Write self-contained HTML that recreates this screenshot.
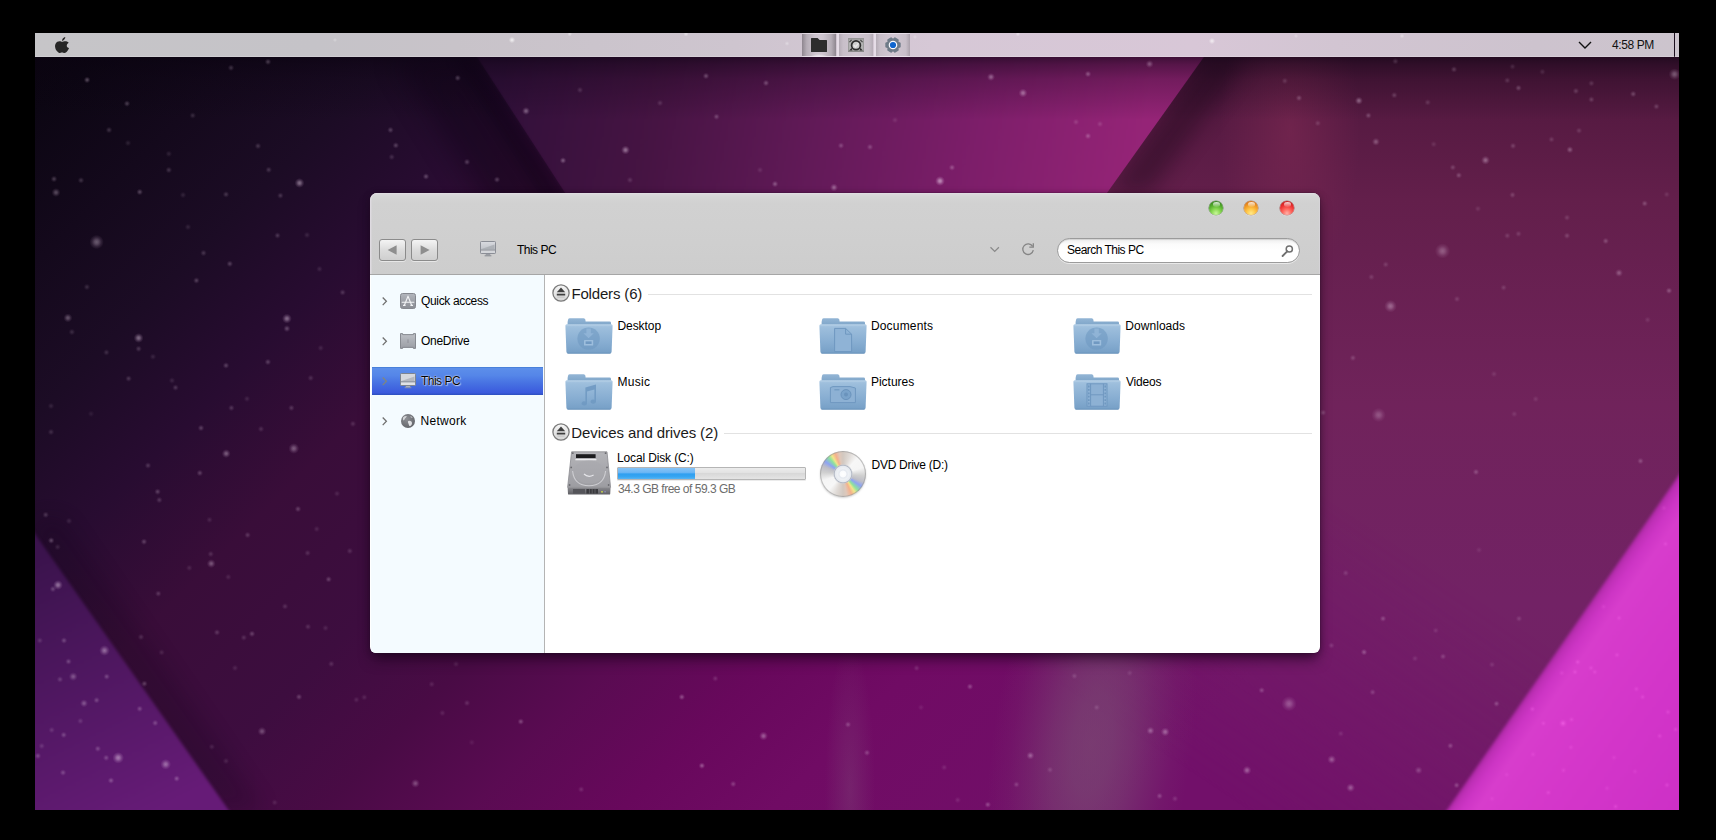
<!DOCTYPE html>
<html lang="en">
<head>
<meta charset="utf-8">
<title>This PC</title>
<style>
html,body{margin:0;padding:0;background:#000;}
body{width:1716px;height:840px;overflow:hidden;position:relative;font-family:"Liberation Sans",sans-serif;font-size:12px;color:#000;}
.abs{position:absolute;}
#wall{position:absolute;left:35px;top:33px;width:1644px;height:777px;display:block;}
#taskbar{position:absolute;left:35px;top:33px;width:1644px;height:24px;
  background:linear-gradient(90deg,#c6c5c8 0px,#c5c3c8 280px,#c8c3c9 420px,#cec5cf 700px,#d6c8d6 900px,#d8c7d7 1160px,#d2c5d2 1300px,#cdc3ce 1500px,#ccc4cd 1644px);}
#win{position:absolute;left:370px;top:193px;width:950px;height:460px;border-radius:7px 7px 6px 6px;background:#fff;overflow:hidden;
  box-shadow:0 0 0 0.5px rgba(40,20,40,.35);}
#winshadow{position:absolute;left:370px;top:193px;width:950px;height:460px;border-radius:7px;
  box-shadow:0 9px 14px -3px rgba(20,0,22,.6), 0 1px 7px rgba(20,0,22,.35);}
#chrome{position:absolute;left:0;top:0;width:950px;height:81px;border-radius:7px 7px 0 0;background:linear-gradient(#e2dfe4 0,#d9d8da 1.5px,#d4d5d5 4px,#d1d1d1 10px,#d0d0d0 40%,#cdcdcd);border-bottom:1px solid #a6a6a6;box-shadow:inset 1.5px 0 0 rgba(222,218,224,.95), inset -1px 0 0 rgba(214,212,216,.9);}
#side{position:absolute;left:1px;top:82px;width:173px;height:378px;background:#f4fbff;}
#divider{position:absolute;left:174px;top:82px;width:1px;height:378px;background:#b4b4b4;}
.t{position:absolute;white-space:nowrap;line-height:14px;height:14px;font-size:12px;color:#000;}
.h{position:absolute;white-space:nowrap;line-height:18px;height:18px;font-size:15px;color:#1a1a1a;}
.navb{position:absolute;width:27px;height:22px;border:1px solid #8b8b8b;border-radius:3px;
  background:linear-gradient(#f4f4f4,#dcdcdc 50%,#cfcfcf);box-shadow:0 1px 0 rgba(255,255,255,.5);box-sizing:border-box;}
.ball{position:absolute;width:14px;height:14px;border-radius:50%;box-sizing:border-box;}
.ball i{position:absolute;left:3.5px;top:1px;width:7px;height:4.5px;border-radius:50%;background:linear-gradient(rgba(255,255,255,.85),rgba(255,255,255,.1));}
</style>
</head>
<body>

<!-- ================= WALLPAPER ================= -->
<svg id="wall" viewBox="35 33 1644 777" preserveAspectRatio="none">
<defs>
  <linearGradient id="gBase" x1="35" y1="57" x2="954" y2="976" gradientUnits="userSpaceOnUse">
    <stop offset="0" stop-color="#0a0510"/>
    <stop offset="0.03" stop-color="#0c0613"/>
    <stop offset="0.195" stop-color="#1c0c25"/>
    <stop offset="0.282" stop-color="#280c31"/>
    <stop offset="0.372" stop-color="#390d39"/>
    <stop offset="0.483" stop-color="#3d0d3f"/>
    <stop offset="0.565" stop-color="#490b45"/>
    <stop offset="0.646" stop-color="#5a0b52"/>
    <stop offset="0.728" stop-color="#68085c"/>
    <stop offset="0.81" stop-color="#700b64"/>
    <stop offset="1" stop-color="#72106a"/>
  </linearGradient>
  <linearGradient id="gTopDark" x1="0" y1="57" x2="0" y2="120" gradientUnits="userSpaceOnUse">
    <stop offset="0" stop-color="#0a0310" stop-opacity=".62"/>
    <stop offset="0.12" stop-color="#0a0310" stop-opacity=".45"/>
    <stop offset="0.35" stop-color="#0a0310" stop-opacity=".25"/>
    <stop offset="1" stop-color="#0a0310" stop-opacity="0"/>
  </linearGradient>
  <linearGradient id="gV" x1="500" y1="80" x2="1130" y2="200" gradientUnits="userSpaceOnUse">
    <stop offset="0" stop-color="#31103a"/>
    <stop offset="0.25" stop-color="#461443"/>
    <stop offset="0.5" stop-color="#621a58"/>
    <stop offset="0.75" stop-color="#7d1e6a"/>
    <stop offset="1" stop-color="#952477"/>
  </linearGradient>
  <linearGradient id="gRight" x1="0" y1="57" x2="0" y2="810" gradientUnits="userSpaceOnUse">
    <stop offset="0" stop-color="#4e173c"/>
    <stop offset="0.19" stop-color="#631f4b"/>
    <stop offset="0.46" stop-color="#70235b"/>
    <stop offset="0.72" stop-color="#722265"/>
    <stop offset="1" stop-color="#722068"/>
  </linearGradient>
  <linearGradient id="gRightFade" x1="1150" y1="0" x2="1480" y2="0" gradientUnits="userSpaceOnUse">
    <stop offset="0" stop-color="#6e1e64" stop-opacity="0"/>
    <stop offset="1" stop-color="#6e1e64" stop-opacity="1"/>
  </linearGradient>
  <linearGradient id="gBL" x1="35" y1="560" x2="160" y2="810" gradientUnits="userSpaceOnUse">
    <stop offset="0" stop-color="#3b134d"/>
    <stop offset="1" stop-color="#661b77"/>
  </linearGradient>
  <linearGradient id="gBR" x1="1516.4" y1="710" x2="1680.8" y2="823.8" gradientUnits="userSpaceOnUse">
    <stop offset="0" stop-color="#ac29a5"/>
    <stop offset="0.025" stop-color="#c030b8"/>
    <stop offset="0.06" stop-color="#cd35c5"/>
    <stop offset="0.12" stop-color="#d73dcc"/>
    <stop offset="0.22" stop-color="#d63acb"/>
    <stop offset="0.5" stop-color="#d335c9"/>
    <stop offset="1" stop-color="#cc2fc6"/>
  </linearGradient>
  <radialGradient id="gAur" cx="0" cy="0" r="1" gradientUnits="userSpaceOnUse" gradientTransform="translate(1092 745) rotate(8) scale(100 250)">
    <stop offset="0" stop-color="#7e6078" stop-opacity=".54"/>
    <stop offset="0.2" stop-color="#7e6078" stop-opacity=".5"/>
    <stop offset="0.4" stop-color="#7e6078" stop-opacity=".38"/>
    <stop offset="0.6" stop-color="#7e6078" stop-opacity=".22"/>
    <stop offset="0.8" stop-color="#7e6078" stop-opacity=".08"/>
    <stop offset="1" stop-color="#7e6078" stop-opacity="0"/>
  </radialGradient>
  <radialGradient id="gAur2" cx="0" cy="0" r="1" gradientUnits="userSpaceOnUse" gradientTransform="translate(850 790) scale(25 150)">
    <stop offset="0" stop-color="#80507c" stop-opacity=".32"/>
    <stop offset="1" stop-color="#80507c" stop-opacity="0"/>
  </radialGradient>
  <radialGradient id="gAur3" cx="0" cy="0" r="1" gradientUnits="userSpaceOnUse" gradientTransform="translate(1290 130) scale(70 160)">
    <stop offset="0" stop-color="#862c56" stop-opacity=".5"/>
    <stop offset="1" stop-color="#862c56" stop-opacity="0"/>
  </radialGradient>
  <filter id="blur8" color-interpolation-filters="sRGB" x="-20%" y="-20%" width="140%" height="140%"><feGaussianBlur stdDeviation="10"/></filter>
  <linearGradient id="gMaskH" x1="1150" y1="810" x2="1350" y2="510" gradientUnits="userSpaceOnUse">
    <stop offset="0" stop-color="#000"/><stop offset="0.15" stop-color="#000"/><stop offset="1" stop-color="#fff"/>
  </linearGradient>
  <mask id="mRight" maskUnits="userSpaceOnUse" x="35" y="33" width="1644" height="777">
    <rect x="35" y="33" width="1644" height="777" fill="url(#gMaskH)"/>
  </mask>
  <clipPath id="cBR"><polygon points="1679,475 1679,810 1447,810"/></clipPath>
  <clipPath id="cBL"><polygon points="35,536 226,810 35,810"/></clipPath>
  <filter id="blur14" color-interpolation-filters="sRGB" x="-30%" y="-30%" width="160%" height="160%"><feGaussianBlur stdDeviation="14"/></filter>
  <radialGradient id="sgp" cx=".5" cy=".5" r=".5">
    <stop offset="0" stop-color="#ff7cf4" stop-opacity=".95"/>
    <stop offset=".35" stop-color="#f866ea" stop-opacity=".7"/>
    <stop offset=".7" stop-color="#ee58e0" stop-opacity=".3"/>
    <stop offset="1" stop-color="#e850da" stop-opacity="0"/>
  </radialGradient>
  <radialGradient id="sg" cx=".5" cy=".5" r=".5">
    <stop offset="0" stop-color="#f2e0f2" stop-opacity=".9"/>
    <stop offset=".3" stop-color="#ecd2ec" stop-opacity=".72"/>
    <stop offset=".65" stop-color="#e4c2e4" stop-opacity=".3"/>
    <stop offset="1" stop-color="#e0b4e0" stop-opacity="0"/>
  </radialGradient>
  <filter id="blurE" color-interpolation-filters="sRGB" x="-10%" y="-10%" width="120%" height="120%"><feGaussianBlur stdDeviation="1.8"/></filter>
  <filter id="blurV" color-interpolation-filters="sRGB" x="-10%" y="-10%" width="120%" height="120%"><feGaussianBlur stdDeviation="0.9"/></filter>
  <filter id="blur5" color-interpolation-filters="sRGB" x="-20%" y="-20%" width="140%" height="140%"><feGaussianBlur stdDeviation="5"/></filter>
  <filter id="sblur" color-interpolation-filters="sRGB" x="-5%" y="-5%" width="110%" height="110%"><feGaussianBlur stdDeviation="0.55"/></filter>
  <clipPath id="cRight"><polygon points="1204,57 1679,57 1679,660 1060,660 1107,193"/></clipPath>
  <clipPath id="cLeft"><polygon points="35,57 477,57 836,611 35,611"/></clipPath>
  <clipPath id="cNotBL"><polygon points="35,57 1679,57 1679,810 226,810 35,536"/></clipPath>
  <clipPath id="cNotBR"><polygon points="35,57 1679,57 1679,475 1447,810 35,810"/></clipPath>
</defs>
<rect x="35" y="33" width="1644" height="777" fill="url(#gBase)"/>
<!-- central V beam -->
<polygon points="464,37 1218.4,37 836,611" fill="url(#gV)" filter="url(#blurV)"/>
<!-- shadow band left of V -->
<g clip-path="url(#cLeft)"><polygon points="395,57 477,57 836,611 740,611" fill="#0c0312" opacity=".42" filter="url(#blur14)"/><polygon points="452,57 477,57 836,611 806,611" fill="#0c0312" opacity=".3" filter="url(#blur5)"/></g>
<!-- right dusty region -->
<polygon points="1204,57 1679,57 1679,810 1060,810 1060,600 1107,193" fill="url(#gRight)" mask="url(#mRight)"/>
<g clip-path="url(#cRight)"><polygon points="1204,57 1250,57 1150,193 1107,193" fill="#1a0618" opacity=".4" filter="url(#blur8)"/></g>
<g clip-path="url(#cRight)"><ellipse cx="1290" cy="130" rx="70" ry="160" fill="url(#gAur3)"/></g>
<!-- aurora streaks -->
<rect x="880" y="480" width="440" height="330" fill="url(#gAur)"/>
<rect x="800" y="640" width="100" height="170" fill="url(#gAur2)"/>
<!-- bottom-left triangle -->
<g clip-path="url(#cNotBL)"><polygon points="35,518 62,518 264,810 35,810" fill="#14051a" opacity=".22" filter="url(#blur8)"/></g>
<polygon points="-5,477 35,534 228.5,810 250,850 -5,850" fill="url(#gBL)" filter="url(#blurE)"/>
<!-- bottom-right triangle -->
<polygon points="1720,415.8 1679,475 1447,810 1420,849 1720,849" fill="url(#gBR)" filter="url(#blurE)"/>
<rect x="35" y="57" width="1644" height="70" fill="url(#gTopDark)"/>
<g id="stars">
<circle cx="87.1" cy="79.9" r="3.38" fill="url(#sg)" opacity="0.34"/>
<circle cx="268.0" cy="61.8" r="3.38" fill="url(#sg)" opacity="0.26"/>
<circle cx="231.0" cy="67.8" r="3.38" fill="url(#sg)" opacity="0.21"/>
<circle cx="127.0" cy="103.6" r="3.38" fill="url(#sg)" opacity="0.26"/>
<circle cx="192.7" cy="115.5" r="3.38" fill="url(#sg)" opacity="0.17"/>
<circle cx="109.0" cy="130.0" r="3.38" fill="url(#sg)" opacity="0.21"/>
<circle cx="128.0" cy="143.0" r="3.38" fill="url(#sg)" opacity="0.13"/>
<circle cx="258.0" cy="146.0" r="3.38" fill="url(#sg)" opacity="0.21"/>
<circle cx="390.5" cy="130.0" r="3.38" fill="url(#sg)" opacity="0.26"/>
<circle cx="395.8" cy="145.4" r="3.38" fill="url(#sg)" opacity="0.26"/>
<circle cx="391.7" cy="157.0" r="3.38" fill="url(#sg)" opacity="0.17"/>
<circle cx="168.8" cy="153.8" r="3.38" fill="url(#sg)" opacity="0.13"/>
<circle cx="168.8" cy="170.0" r="3.38" fill="url(#sg)" opacity="0.21"/>
<circle cx="268.7" cy="169.8" r="3.38" fill="url(#sg)" opacity="0.21"/>
<circle cx="299.5" cy="183.0" r="4.95" fill="url(#sg)" opacity="0.51"/>
<circle cx="426.0" cy="176.5" r="3.38" fill="url(#sg)" opacity="0.30"/>
<circle cx="54.0" cy="179.0" r="3.38" fill="url(#sg)" opacity="0.26"/>
<circle cx="81.0" cy="180.3" r="3.38" fill="url(#sg)" opacity="0.21"/>
<circle cx="56.0" cy="192.5" r="4.50" fill="url(#sg)" opacity="0.34"/>
<circle cx="139.7" cy="192.0" r="3.38" fill="url(#sg)" opacity="0.30"/>
<circle cx="226.0" cy="194.4" r="3.38" fill="url(#sg)" opacity="0.21"/>
<circle cx="280.4" cy="195.6" r="3.38" fill="url(#sg)" opacity="0.21"/>
<circle cx="183.0" cy="195.0" r="3.38" fill="url(#sg)" opacity="0.13"/>
<circle cx="96.6" cy="242.0" r="7.20" fill="url(#sg)" opacity="0.42"/>
<circle cx="277.5" cy="235.5" r="3.38" fill="url(#sg)" opacity="0.21"/>
<circle cx="188.0" cy="227.0" r="3.38" fill="url(#sg)" opacity="0.13"/>
<circle cx="203.5" cy="253.0" r="3.38" fill="url(#sg)" opacity="0.21"/>
<circle cx="307.0" cy="235.0" r="3.38" fill="url(#sg)" opacity="0.13"/>
<circle cx="229.8" cy="263.8" r="3.38" fill="url(#sg)" opacity="0.26"/>
<circle cx="196.4" cy="280.5" r="3.38" fill="url(#sg)" opacity="0.26"/>
<circle cx="86.9" cy="287.0" r="3.38" fill="url(#sg)" opacity="0.17"/>
<circle cx="342.6" cy="292.4" r="3.38" fill="url(#sg)" opacity="0.21"/>
<circle cx="319.5" cy="269.0" r="3.38" fill="url(#sg)" opacity="0.13"/>
<circle cx="67.9" cy="317.9" r="4.50" fill="url(#sg)" opacity="0.38"/>
<circle cx="71.9" cy="332.0" r="3.38" fill="url(#sg)" opacity="0.17"/>
<circle cx="286.9" cy="318.6" r="4.95" fill="url(#sg)" opacity="0.51"/>
<circle cx="286.9" cy="328.6" r="3.60" fill="url(#sg)" opacity="0.30"/>
<circle cx="138.6" cy="338.0" r="4.95" fill="url(#sg)" opacity="0.51"/>
<circle cx="138.6" cy="348.8" r="3.38" fill="url(#sg)" opacity="0.21"/>
<circle cx="106.4" cy="352.4" r="3.38" fill="url(#sg)" opacity="0.17"/>
<circle cx="152.9" cy="356.7" r="3.38" fill="url(#sg)" opacity="0.13"/>
<circle cx="226.0" cy="365.5" r="3.38" fill="url(#sg)" opacity="0.26"/>
<circle cx="267.9" cy="362.0" r="3.38" fill="url(#sg)" opacity="0.26"/>
<circle cx="320.7" cy="348.0" r="3.38" fill="url(#sg)" opacity="0.13"/>
<circle cx="310.7" cy="378.0" r="3.38" fill="url(#sg)" opacity="0.17"/>
<circle cx="128.6" cy="378.6" r="3.38" fill="url(#sg)" opacity="0.21"/>
<circle cx="175.5" cy="387.6" r="3.38" fill="url(#sg)" opacity="0.21"/>
<circle cx="172.0" cy="380.5" r="3.38" fill="url(#sg)" opacity="0.13"/>
<circle cx="231.4" cy="407.9" r="3.38" fill="url(#sg)" opacity="0.21"/>
<circle cx="291.4" cy="407.9" r="3.38" fill="url(#sg)" opacity="0.21"/>
<circle cx="247.0" cy="398.8" r="3.38" fill="url(#sg)" opacity="0.13"/>
<circle cx="201.0" cy="428.0" r="3.38" fill="url(#sg)" opacity="0.26"/>
<circle cx="261.0" cy="429.0" r="3.38" fill="url(#sg)" opacity="0.17"/>
<circle cx="352.9" cy="423.8" r="3.38" fill="url(#sg)" opacity="0.17"/>
<circle cx="293.8" cy="448.5" r="5.40" fill="url(#sg)" opacity="0.42"/>
<circle cx="51.0" cy="406.0" r="3.38" fill="url(#sg)" opacity="0.13"/>
<circle cx="51.0" cy="432.0" r="3.38" fill="url(#sg)" opacity="0.17"/>
<circle cx="91.0" cy="413.8" r="3.38" fill="url(#sg)" opacity="0.09"/>
<circle cx="226.2" cy="453.6" r="4.50" fill="url(#sg)" opacity="0.42"/>
<circle cx="148.0" cy="465.5" r="3.38" fill="url(#sg)" opacity="0.21"/>
<circle cx="199.8" cy="473.0" r="3.38" fill="url(#sg)" opacity="0.26"/>
<circle cx="157.6" cy="491.7" r="3.38" fill="url(#sg)" opacity="0.26"/>
<circle cx="159.3" cy="500.0" r="3.38" fill="url(#sg)" opacity="0.21"/>
<circle cx="298.0" cy="509.0" r="3.38" fill="url(#sg)" opacity="0.26"/>
<circle cx="337.0" cy="493.6" r="3.38" fill="url(#sg)" opacity="0.13"/>
<circle cx="45.7" cy="514.8" r="3.38" fill="url(#sg)" opacity="0.21"/>
<circle cx="69.0" cy="521.0" r="3.38" fill="url(#sg)" opacity="0.13"/>
<circle cx="209.5" cy="519.8" r="3.38" fill="url(#sg)" opacity="0.13"/>
<circle cx="247.6" cy="535.0" r="3.38" fill="url(#sg)" opacity="0.21"/>
<circle cx="316.7" cy="529.0" r="3.38" fill="url(#sg)" opacity="0.13"/>
<circle cx="144.0" cy="541.7" r="3.38" fill="url(#sg)" opacity="0.26"/>
<circle cx="51.2" cy="540.5" r="3.38" fill="url(#sg)" opacity="0.30"/>
<circle cx="57.6" cy="547.0" r="3.38" fill="url(#sg)" opacity="0.13"/>
<circle cx="307.6" cy="553.0" r="3.38" fill="url(#sg)" opacity="0.17"/>
<circle cx="349.8" cy="551.0" r="3.38" fill="url(#sg)" opacity="0.17"/>
<circle cx="211.2" cy="563.6" r="4.50" fill="url(#sg)" opacity="0.38"/>
<circle cx="210.7" cy="554.0" r="3.38" fill="url(#sg)" opacity="0.17"/>
<circle cx="189.3" cy="567.9" r="3.38" fill="url(#sg)" opacity="0.13"/>
<circle cx="228.3" cy="577.0" r="3.38" fill="url(#sg)" opacity="0.13"/>
<circle cx="328.6" cy="579.3" r="3.38" fill="url(#sg)" opacity="0.26"/>
<circle cx="58.0" cy="585.0" r="4.95" fill="url(#sg)" opacity="0.51"/>
<circle cx="52.9" cy="589.0" r="3.38" fill="url(#sg)" opacity="0.26"/>
<circle cx="158.3" cy="593.6" r="3.38" fill="url(#sg)" opacity="0.21"/>
<circle cx="285.0" cy="606.4" r="3.38" fill="url(#sg)" opacity="0.17"/>
<circle cx="308.0" cy="626.7" r="3.38" fill="url(#sg)" opacity="0.17"/>
<circle cx="325.5" cy="628.0" r="3.38" fill="url(#sg)" opacity="0.13"/>
<circle cx="217.0" cy="632.4" r="3.38" fill="url(#sg)" opacity="0.21"/>
<circle cx="252.0" cy="633.8" r="3.38" fill="url(#sg)" opacity="0.26"/>
<circle cx="243.8" cy="637.6" r="3.38" fill="url(#sg)" opacity="0.17"/>
<circle cx="141.0" cy="637.0" r="3.38" fill="url(#sg)" opacity="0.17"/>
<circle cx="64.0" cy="640.5" r="3.38" fill="url(#sg)" opacity="0.26"/>
<circle cx="39.8" cy="640.5" r="3.38" fill="url(#sg)" opacity="0.17"/>
<circle cx="104.5" cy="650.5" r="5.40" fill="url(#sg)" opacity="0.47"/>
<circle cx="68.5" cy="661.5" r="3.38" fill="url(#sg)" opacity="0.26"/>
<circle cx="73.2" cy="676.6" r="4.50" fill="url(#sg)" opacity="0.34"/>
<circle cx="106.7" cy="676.6" r="3.38" fill="url(#sg)" opacity="0.26"/>
<circle cx="60.0" cy="679.4" r="3.38" fill="url(#sg)" opacity="0.21"/>
<circle cx="144.4" cy="683.7" r="3.38" fill="url(#sg)" opacity="0.26"/>
<circle cx="84.0" cy="703.3" r="4.05" fill="url(#sg)" opacity="0.34"/>
<circle cx="96.6" cy="700.2" r="3.38" fill="url(#sg)" opacity="0.26"/>
<circle cx="139.7" cy="708.8" r="3.38" fill="url(#sg)" opacity="0.26"/>
<circle cx="155.2" cy="723.0" r="3.38" fill="url(#sg)" opacity="0.26"/>
<circle cx="63.7" cy="734.9" r="3.38" fill="url(#sg)" opacity="0.26"/>
<circle cx="80.4" cy="721.0" r="3.38" fill="url(#sg)" opacity="0.17"/>
<circle cx="51.7" cy="730.0" r="3.38" fill="url(#sg)" opacity="0.17"/>
<circle cx="97.8" cy="748.7" r="3.38" fill="url(#sg)" opacity="0.26"/>
<circle cx="118.2" cy="757.8" r="5.85" fill="url(#sg)" opacity="0.55"/>
<circle cx="106.2" cy="757.8" r="3.38" fill="url(#sg)" opacity="0.26"/>
<circle cx="165.7" cy="764.3" r="5.40" fill="url(#sg)" opacity="0.47"/>
<circle cx="176.7" cy="778.6" r="3.38" fill="url(#sg)" opacity="0.30"/>
<circle cx="111.0" cy="780.5" r="3.38" fill="url(#sg)" opacity="0.30"/>
<circle cx="63.0" cy="772.6" r="3.38" fill="url(#sg)" opacity="0.26"/>
<circle cx="37.9" cy="755.9" r="3.38" fill="url(#sg)" opacity="0.26"/>
<circle cx="41.7" cy="746.0" r="3.38" fill="url(#sg)" opacity="0.17"/>
<circle cx="262.0" cy="731.3" r="4.50" fill="url(#sg)" opacity="0.34"/>
<circle cx="299.0" cy="696.9" r="3.38" fill="url(#sg)" opacity="0.26"/>
<circle cx="331.3" cy="663.9" r="3.38" fill="url(#sg)" opacity="0.17"/>
<circle cx="356.4" cy="699.7" r="3.38" fill="url(#sg)" opacity="0.13"/>
<circle cx="364.3" cy="697.3" r="3.38" fill="url(#sg)" opacity="0.13"/>
<circle cx="415.4" cy="783.4" r="4.50" fill="url(#sg)" opacity="0.34"/>
<circle cx="211.8" cy="746.8" r="3.38" fill="url(#sg)" opacity="0.13"/>
<circle cx="226.0" cy="761.0" r="3.38" fill="url(#sg)" opacity="0.13"/>
<circle cx="274.7" cy="802.5" r="3.38" fill="url(#sg)" opacity="0.13"/>
<circle cx="235.0" cy="668.0" r="3.38" fill="url(#sg)" opacity="0.13"/>
<circle cx="161.6" cy="652.4" r="3.38" fill="url(#sg)" opacity="0.13"/>
<circle cx="431.7" cy="684.2" r="3.38" fill="url(#sg)" opacity="0.13"/>
<circle cx="456.0" cy="664.0" r="3.38" fill="url(#sg)" opacity="0.13"/>
<circle cx="467.0" cy="703.0" r="3.38" fill="url(#sg)" opacity="0.17"/>
<circle cx="520.8" cy="721.6" r="3.38" fill="url(#sg)" opacity="0.30"/>
<circle cx="681.8" cy="697.0" r="3.38" fill="url(#sg)" opacity="0.34"/>
<circle cx="715.3" cy="678.5" r="3.38" fill="url(#sg)" opacity="0.17"/>
<circle cx="763.5" cy="736.0" r="4.50" fill="url(#sg)" opacity="0.42"/>
<circle cx="701.9" cy="765.7" r="3.38" fill="url(#sg)" opacity="0.38"/>
<circle cx="733.2" cy="784.0" r="3.38" fill="url(#sg)" opacity="0.26"/>
<circle cx="581.2" cy="789.4" r="3.38" fill="url(#sg)" opacity="0.17"/>
<circle cx="848.0" cy="724.5" r="3.38" fill="url(#sg)" opacity="0.26"/>
<circle cx="471.8" cy="742.4" r="3.38" fill="url(#sg)" opacity="0.09"/>
<circle cx="442.4" cy="713.0" r="3.38" fill="url(#sg)" opacity="0.13"/>
<circle cx="916.6" cy="668.0" r="3.38" fill="url(#sg)" opacity="0.17"/>
<circle cx="970.0" cy="686.6" r="3.38" fill="url(#sg)" opacity="0.30"/>
<circle cx="1074.4" cy="676.0" r="3.38" fill="url(#sg)" opacity="0.17"/>
<circle cx="1129.7" cy="673.0" r="3.38" fill="url(#sg)" opacity="0.13"/>
<circle cx="1096.7" cy="707.4" r="3.38" fill="url(#sg)" opacity="0.17"/>
<circle cx="1150.5" cy="730.7" r="4.05" fill="url(#sg)" opacity="0.38"/>
<circle cx="1165.2" cy="731.9" r="4.50" fill="url(#sg)" opacity="0.42"/>
<circle cx="1030.4" cy="755.6" r="4.05" fill="url(#sg)" opacity="0.38"/>
<circle cx="867.0" cy="752.7" r="3.38" fill="url(#sg)" opacity="0.26"/>
<circle cx="1050.0" cy="769.8" r="3.38" fill="url(#sg)" opacity="0.17"/>
<circle cx="944.2" cy="767.4" r="3.38" fill="url(#sg)" opacity="0.13"/>
<circle cx="1016.4" cy="784.5" r="3.38" fill="url(#sg)" opacity="0.21"/>
<circle cx="987.8" cy="804.6" r="3.38" fill="url(#sg)" opacity="0.30"/>
<circle cx="957.7" cy="800.0" r="3.38" fill="url(#sg)" opacity="0.13"/>
<circle cx="1159.6" cy="796.0" r="3.38" fill="url(#sg)" opacity="0.26"/>
<circle cx="1175.0" cy="798.7" r="3.38" fill="url(#sg)" opacity="0.17"/>
<circle cx="1247.0" cy="770.3" r="4.50" fill="url(#sg)" opacity="0.42"/>
<circle cx="1261.7" cy="690.3" r="3.38" fill="url(#sg)" opacity="0.26"/>
<circle cx="921.0" cy="707.4" r="3.38" fill="url(#sg)" opacity="0.10"/>
<circle cx="1563.0" cy="723.3" r="4.50" fill="url(#sgp)" opacity="0.51"/>
<circle cx="1577.7" cy="662.0" r="3.38" fill="url(#sgp)" opacity="0.34"/>
<circle cx="1575.0" cy="672.0" r="3.38" fill="url(#sgp)" opacity="0.30"/>
<circle cx="1591.0" cy="668.0" r="3.38" fill="url(#sgp)" opacity="0.26"/>
<circle cx="1617.0" cy="655.0" r="3.38" fill="url(#sgp)" opacity="0.26"/>
<circle cx="1532.4" cy="709.0" r="3.38" fill="url(#sgp)" opacity="0.30"/>
<circle cx="1543.4" cy="723.3" r="3.38" fill="url(#sgp)" opacity="0.26"/>
<circle cx="1571.6" cy="719.6" r="3.38" fill="url(#sgp)" opacity="0.26"/>
<circle cx="1636.4" cy="689.0" r="3.38" fill="url(#sgp)" opacity="0.26"/>
<circle cx="1642.6" cy="697.0" r="3.38" fill="url(#sgp)" opacity="0.26"/>
<circle cx="1668.0" cy="712.0" r="3.38" fill="url(#sgp)" opacity="0.26"/>
<circle cx="1659.7" cy="736.0" r="3.38" fill="url(#sgp)" opacity="0.26"/>
<circle cx="1675.6" cy="729.4" r="3.38" fill="url(#sgp)" opacity="0.26"/>
<circle cx="1570.9" cy="747.3" r="3.38" fill="url(#sgp)" opacity="0.21"/>
<circle cx="1533.0" cy="754.4" r="3.38" fill="url(#sgp)" opacity="0.21"/>
<circle cx="1563.5" cy="770.3" r="3.38" fill="url(#sgp)" opacity="0.21"/>
<circle cx="1548.3" cy="792.6" r="3.38" fill="url(#sgp)" opacity="0.26"/>
<circle cx="1607.0" cy="788.2" r="3.38" fill="url(#sgp)" opacity="0.17"/>
<circle cx="1667.0" cy="785.0" r="3.38" fill="url(#sgp)" opacity="0.26"/>
<circle cx="1615.6" cy="806.5" r="3.38" fill="url(#sgp)" opacity="0.26"/>
<circle cx="1635.0" cy="771.5" r="3.38" fill="url(#sgp)" opacity="0.17"/>
<circle cx="1492.0" cy="798.7" r="3.38" fill="url(#sgp)" opacity="0.17"/>
<circle cx="1506.7" cy="774.7" r="3.38" fill="url(#sgp)" opacity="0.17"/>
<circle cx="1594.8" cy="672.0" r="3.38" fill="url(#sgp)" opacity="0.26"/>
<circle cx="1561.8" cy="673.0" r="3.38" fill="url(#sgp)" opacity="0.21"/>
<circle cx="1614.0" cy="757.6" r="3.38" fill="url(#sgp)" opacity="0.17"/>
<circle cx="1289.0" cy="703.7" r="7.65" fill="url(#sg)" opacity="0.36"/>
<circle cx="1331.7" cy="759.5" r="4.50" fill="url(#sg)" opacity="0.38"/>
<circle cx="1350.6" cy="787.7" r="4.50" fill="url(#sg)" opacity="0.38"/>
<circle cx="1418.6" cy="770.3" r="4.05" fill="url(#sg)" opacity="0.26"/>
<circle cx="1450.4" cy="745.8" r="3.38" fill="url(#sg)" opacity="0.26"/>
<circle cx="1496.5" cy="703.7" r="3.38" fill="url(#sg)" opacity="0.26"/>
<circle cx="1372.6" cy="692.2" r="3.38" fill="url(#sg)" opacity="0.21"/>
<circle cx="1443.0" cy="656.5" r="3.38" fill="url(#sg)" opacity="0.21"/>
<circle cx="1364.3" cy="652.3" r="3.38" fill="url(#sg)" opacity="0.17"/>
<circle cx="1456.6" cy="785.2" r="3.38" fill="url(#sg)" opacity="0.26"/>
<circle cx="1415.0" cy="658.5" r="3.38" fill="url(#sg)" opacity="0.13"/>
<circle cx="1492.0" cy="664.6" r="3.38" fill="url(#sg)" opacity="0.13"/>
<circle cx="1340.8" cy="733.6" r="3.38" fill="url(#sg)" opacity="0.13"/>
<circle cx="1674.5" cy="74.2" r="5.85" fill="url(#sg)" opacity="0.38"/>
<circle cx="1454.0" cy="69.4" r="3.38" fill="url(#sg)" opacity="0.21"/>
<circle cx="1395.4" cy="61.3" r="3.38" fill="url(#sg)" opacity="0.17"/>
<circle cx="1512.5" cy="66.6" r="3.38" fill="url(#sg)" opacity="0.13"/>
<circle cx="1507.3" cy="80.4" r="3.38" fill="url(#sg)" opacity="0.17"/>
<circle cx="1518.5" cy="88.0" r="3.38" fill="url(#sg)" opacity="0.26"/>
<circle cx="1542.4" cy="71.8" r="3.38" fill="url(#sg)" opacity="0.13"/>
<circle cx="1575.9" cy="91.0" r="3.38" fill="url(#sg)" opacity="0.21"/>
<circle cx="1591.4" cy="83.3" r="3.38" fill="url(#sg)" opacity="0.17"/>
<circle cx="1591.4" cy="99.5" r="3.38" fill="url(#sg)" opacity="0.21"/>
<circle cx="1633.2" cy="94.0" r="3.38" fill="url(#sg)" opacity="0.26"/>
<circle cx="1656.4" cy="106.5" r="3.38" fill="url(#sg)" opacity="0.21"/>
<circle cx="1284.8" cy="80.9" r="3.38" fill="url(#sg)" opacity="0.17"/>
<circle cx="1299.0" cy="98.0" r="3.38" fill="url(#sg)" opacity="0.26"/>
<circle cx="1358.9" cy="100.7" r="4.05" fill="url(#sg)" opacity="0.42"/>
<circle cx="1394.3" cy="95.2" r="3.38" fill="url(#sg)" opacity="0.21"/>
<circle cx="1427.7" cy="102.4" r="3.38" fill="url(#sg)" opacity="0.17"/>
<circle cx="1368.4" cy="115.5" r="3.38" fill="url(#sg)" opacity="0.26"/>
<circle cx="1317.8" cy="123.2" r="3.38" fill="url(#sg)" opacity="0.17"/>
<circle cx="1375.9" cy="141.8" r="4.05" fill="url(#sg)" opacity="0.34"/>
<circle cx="1433.7" cy="144.2" r="3.38" fill="url(#sg)" opacity="0.13"/>
<circle cx="1485.5" cy="160.2" r="4.50" fill="url(#sg)" opacity="0.42"/>
<circle cx="1513.0" cy="145.9" r="3.38" fill="url(#sg)" opacity="0.21"/>
<circle cx="1551.5" cy="139.4" r="3.38" fill="url(#sg)" opacity="0.17"/>
<circle cx="1569.9" cy="149.7" r="3.60" fill="url(#sg)" opacity="0.34"/>
<circle cx="1579.0" cy="130.6" r="3.38" fill="url(#sg)" opacity="0.17"/>
<circle cx="1452.8" cy="167.4" r="3.38" fill="url(#sg)" opacity="0.21"/>
<circle cx="1458.8" cy="175.3" r="3.38" fill="url(#sg)" opacity="0.26"/>
<circle cx="1512.5" cy="194.9" r="3.38" fill="url(#sg)" opacity="0.21"/>
<circle cx="1644.7" cy="203.5" r="3.38" fill="url(#sg)" opacity="0.26"/>
<circle cx="1477.9" cy="208.7" r="3.38" fill="url(#sg)" opacity="0.13"/>
<circle cx="1567.0" cy="217.6" r="3.38" fill="url(#sg)" opacity="0.17"/>
<circle cx="1567.0" cy="235.7" r="3.38" fill="url(#sg)" opacity="0.21"/>
<circle cx="1507.3" cy="235.7" r="3.38" fill="url(#sg)" opacity="0.17"/>
<circle cx="1518.5" cy="233.8" r="3.38" fill="url(#sg)" opacity="0.17"/>
<circle cx="1605.7" cy="241.0" r="3.38" fill="url(#sg)" opacity="0.26"/>
<circle cx="1442.5" cy="251.0" r="7.65" fill="url(#sg)" opacity="0.36"/>
<circle cx="1666.7" cy="194.4" r="3.38" fill="url(#sg)" opacity="0.13"/>
<circle cx="1390.5" cy="306.2" r="6.30" fill="url(#sg)" opacity="0.42"/>
<circle cx="1619.0" cy="272.9" r="4.05" fill="url(#sg)" opacity="0.34"/>
<circle cx="1669.0" cy="290.7" r="3.38" fill="url(#sg)" opacity="0.30"/>
<circle cx="1385.7" cy="264.5" r="3.38" fill="url(#sg)" opacity="0.17"/>
<circle cx="1371.4" cy="277.0" r="3.38" fill="url(#sg)" opacity="0.17"/>
<circle cx="1503.6" cy="287.6" r="3.38" fill="url(#sg)" opacity="0.17"/>
<circle cx="1457.0" cy="299.0" r="3.38" fill="url(#sg)" opacity="0.17"/>
<circle cx="1352.9" cy="357.9" r="3.38" fill="url(#sg)" opacity="0.21"/>
<circle cx="1494.0" cy="374.0" r="3.38" fill="url(#sg)" opacity="0.13"/>
<circle cx="1535.7" cy="399.0" r="3.38" fill="url(#sg)" opacity="0.13"/>
<circle cx="1378.6" cy="415.0" r="7.20" fill="url(#sg)" opacity="0.31"/>
<circle cx="1323.0" cy="412.6" r="3.38" fill="url(#sg)" opacity="0.26"/>
<circle cx="1514.3" cy="414.0" r="3.38" fill="url(#sg)" opacity="0.13"/>
<circle cx="1647.6" cy="319.8" r="3.38" fill="url(#sg)" opacity="0.13"/>
<circle cx="1476.0" cy="472.0" r="3.38" fill="url(#sg)" opacity="0.26"/>
<circle cx="1640.5" cy="461.0" r="3.38" fill="url(#sg)" opacity="0.26"/>
<circle cx="1345.7" cy="573.0" r="3.38" fill="url(#sg)" opacity="0.17"/>
<circle cx="1383.0" cy="618.6" r="3.38" fill="url(#sg)" opacity="0.26"/>
<circle cx="1519.0" cy="618.6" r="3.38" fill="url(#sg)" opacity="0.17"/>
<circle cx="1435.7" cy="630.5" r="3.38" fill="url(#sg)" opacity="0.13"/>
<circle cx="1331.4" cy="645.5" r="3.38" fill="url(#sg)" opacity="0.17"/>
<circle cx="1363.8" cy="652.0" r="3.38" fill="url(#sg)" opacity="0.17"/>
<circle cx="1479.0" cy="550.0" r="3.38" fill="url(#sg)" opacity="0.10"/>
<circle cx="1665.5" cy="544.0" r="3.38" fill="url(#sgp)" opacity="0.26"/>
<circle cx="1619.0" cy="618.0" r="3.38" fill="url(#sgp)" opacity="0.26"/>
<circle cx="1603.6" cy="606.7" r="3.38" fill="url(#sgp)" opacity="0.17"/>
<circle cx="1664.0" cy="508.0" r="3.38" fill="url(#sgp)" opacity="0.17"/>
<circle cx="526.0" cy="111.0" r="4.05" fill="url(#sg)" opacity="0.42"/>
<circle cx="625.5" cy="150.0" r="4.50" fill="url(#sg)" opacity="0.51"/>
<circle cx="706.0" cy="76.0" r="3.38" fill="url(#sg)" opacity="0.30"/>
<circle cx="766.0" cy="83.0" r="3.38" fill="url(#sg)" opacity="0.30"/>
<circle cx="991.0" cy="77.0" r="4.05" fill="url(#sg)" opacity="0.42"/>
<circle cx="1023.0" cy="93.0" r="4.50" fill="url(#sg)" opacity="0.47"/>
<circle cx="1088.0" cy="74.0" r="3.38" fill="url(#sg)" opacity="0.34"/>
<circle cx="1149.6" cy="64.0" r="4.05" fill="url(#sg)" opacity="0.34"/>
<circle cx="940.0" cy="181.0" r="4.95" fill="url(#sg)" opacity="0.64"/>
<circle cx="834.0" cy="187.5" r="4.05" fill="url(#sg)" opacity="0.42"/>
<circle cx="775.0" cy="184.0" r="3.38" fill="url(#sg)" opacity="0.34"/>
<circle cx="563.0" cy="160.5" r="3.38" fill="url(#sg)" opacity="0.38"/>
<circle cx="1088.0" cy="136.0" r="3.38" fill="url(#sg)" opacity="0.30"/>
<circle cx="952.0" cy="167.5" r="3.38" fill="url(#sg)" opacity="0.30"/>
<circle cx="716.5" cy="116.7" r="3.38" fill="url(#sg)" opacity="0.26"/>
<circle cx="870.0" cy="147.0" r="3.38" fill="url(#sg)" opacity="0.26"/>
<circle cx="841.0" cy="145.6" r="3.38" fill="url(#sg)" opacity="0.26"/>
<circle cx="457.7" cy="78.0" r="3.38" fill="url(#sg)" opacity="0.26"/>
<circle cx="467.0" cy="162.0" r="3.38" fill="url(#sg)" opacity="0.26"/>
<circle cx="497.0" cy="179.6" r="3.38" fill="url(#sg)" opacity="0.26"/>
<circle cx="1076.0" cy="122.0" r="3.38" fill="url(#sg)" opacity="0.17"/>
<circle cx="1100.0" cy="124.0" r="3.38" fill="url(#sg)" opacity="0.17"/>
<circle cx="580.0" cy="90.0" r="3.38" fill="url(#sg)" opacity="0.17"/>
<circle cx="660.0" cy="103.0" r="3.38" fill="url(#sg)" opacity="0.17"/>
<circle cx="630.0" cy="180.0" r="3.38" fill="url(#sg)" opacity="0.17"/>
<circle cx="760.0" cy="170.0" r="3.38" fill="url(#sg)" opacity="0.13"/>
<circle cx="895.0" cy="120.0" r="3.38" fill="url(#sg)" opacity="0.13"/>
<circle cx="1212.0" cy="42.0" r="5.40" fill="url(#sg)" opacity="0.42"/>
<circle cx="758.0" cy="40.0" r="4.50" fill="url(#sg)" opacity="0.26"/>
<circle cx="540.0" cy="38.0" r="4.50" fill="url(#sg)" opacity="0.21"/>
<circle cx="1000.0" cy="36.0" r="4.50" fill="url(#sg)" opacity="0.26"/>
</g>
</svg>

<!-- ================= TASKBAR ================= -->
<div id="taskbar"></div>
<svg class="abs" style="left:35px;top:33px" width="1644" height="24" viewBox="35 33 1644 24"><defs><radialGradient id="sgt" cx=".5" cy=".5" r=".5"><stop offset="0" stop-color="#fff" stop-opacity="1"/><stop offset=".5" stop-color="#fff" stop-opacity=".5"/><stop offset="1" stop-color="#fff" stop-opacity="0"/></radialGradient></defs><circle cx="512" cy="40" r="3.2" fill="url(#sgt)" opacity="0.8"/><circle cx="569.7" cy="34" r="2.4" fill="url(#sgt)" opacity="0.5"/><circle cx="686" cy="34" r="2.6" fill="url(#sgt)" opacity="0.5"/><circle cx="787" cy="43.5" r="2.4" fill="url(#sgt)" opacity="0.35"/><circle cx="1212" cy="41" r="3.2" fill="url(#sgt)" opacity="0.7"/><circle cx="1018" cy="34" r="2.4" fill="url(#sgt)" opacity="0.5"/><circle cx="1402" cy="36" r="2.4" fill="url(#sgt)" opacity="0.4"/><circle cx="335" cy="40" r="2.2" fill="url(#sgt)" opacity="0.3"/><circle cx="915" cy="37" r="2.2" fill="url(#sgt)" opacity="0.3"/><circle cx="1296" cy="36" r="2.2" fill="url(#sgt)" opacity="0.3"/></svg>
<!-- apple logo -->
<svg class="abs" style="left:53px;top:36px" width="18" height="18" viewBox="0 0 18 18">
  <path d="M12.3 1 C12.2 2.3 11.4 3.6 10.2 4.4 L9.1 5 C8.9 3.8 9.6 2.6 10.4 1.9 C11 1.4 11.7 1.1 12.3 1 Z" fill="#262626"/>
  <g transform="translate(9 0) scale(1.14 1.06) translate(-9 -1)">
  <path d="M15.2 12.4 C14.8 13.5 14.2 14.6 13.4 15.6 C12.8 16.4 12.1 17 11.2 17 C10.3 17 10 16.5 9 16.5 C8 16.5 7.6 17 6.8 17 C5.9 17 5.3 16.3 4.7 15.5 C3.2 13.5 2.2 10.3 3.5 8 C4.2 6.7 5.5 5.9 6.8 5.9 C7.8 5.9 8.6 6.5 9.2 6.5 C9.8 6.5 10.8 5.8 12 5.9 C12.6 5.9 14 6.1 14.9 7.4 C13.6 8.2 13.1 9.4 13.2 10.4 C13.3 11.4 13.9 12.1 15.2 12.4 Z" fill="#262626"/>
  </g>
</svg>

<!-- taskbar buttons -->
<div class="abs" style="left:802px;top:33px;width:34px;height:24px;background:
  radial-gradient(ellipse 9px 3px at 50% 100%, rgba(255,255,255,.9), rgba(255,255,255,0) 100%),
  linear-gradient(90deg,#8e868f 0,#b5adb6 14%,#cdc4ce 38%,#d0c7d1 50%,#cdc4ce 62%,#b5adb6 86%,#8e868f 100%);"></div>
<div class="abs" style="left:836.5px;top:33px;width:2.5px;height:24px;background:#e6dde7;"></div>
<div class="abs" style="left:839px;top:33px;width:34px;height:24px;background:linear-gradient(90deg,#b5acb6 0,#c8bfc9 12%,#d0c6d1 50%,#c8bfc9 88%,#b5acb6 100%);"></div>
<div class="abs" style="left:873.5px;top:33px;width:2.5px;height:24px;background:#e6dde7;"></div>
<div class="abs" style="left:876px;top:33px;width:34px;height:24px;background:linear-gradient(90deg,#b5acb6 0,#c8bfc9 12%,#d2c8d3 50%,#c8bfc9 88%,#aaa1ab 100%);"></div>

<!-- folder icon -->
<svg class="abs" style="left:811px;top:38px" width="16" height="14" viewBox="0 0 16 14">
  <path d="M0 .6 Q0 0 .6 0 H6.6 L8.6 2 H15.4 Q16 2 16 2.6 V13.4 Q16 14 15.4 14 H.6 Q0 14 0 13.4 Z" fill="#2d2d2d"/>
</svg>
<!-- task view / screenshot-like icon -->
<svg class="abs" style="left:848px;top:38px" width="16" height="14" viewBox="0 0 16 14">
  <rect x="0" y="0" width="16" height="14" fill="#969696"/>
  <rect x=".8" y="1.6" width="14.4" height="11.2" fill="#b2b2b2"/>
  <rect x="0" y="12.6" width="16" height="1.4" fill="#8a8a8a"/>
  <circle cx="8" cy="7.2" r="4.4" fill="#cfcfcf" stroke="#2e2e2e" stroke-width="1.7"/>
  <path d="M5.8 7 L7.5 8.9 L10.4 5.4" fill="none" stroke="#e9e9e9" stroke-width="1.4"/>
  <path d="M1.4 4.2 L3.6 2 M14.6 4.2 L12.4 2" stroke="#4a4a4a" stroke-width="1.1"/>
  <path d="M1.2 12.4 L3.6 9.8 L4.4 12.4 Z M14.8 12.4 L12.4 9.8 L11.6 12.4 Z" fill="#2e2e2e"/>
</svg>
<!-- gear icon -->
<svg class="abs" style="left:884px;top:36px" width="18" height="18" viewBox="0 0 18 18">
  <path d="M14.12 6.72 L15.79 7.31 L15.79 10.69 L14.12 11.28 L13.53 12.29 L13.86 14.04 L10.93 15.73 L9.59 14.57 L8.41 14.57 L7.07 15.73 L4.14 14.04 L4.47 12.29 L3.88 11.28 L2.21 10.69 L2.21 7.31 L3.88 6.72 L4.47 5.71 L4.14 3.96 L7.07 2.27 L8.41 3.43 L9.59 3.43 L10.93 2.27 L13.86 3.96 L13.53 5.71 Z" fill="#6f7b88" stroke="#6f7b88" stroke-width="1.8" stroke-linejoin="round"/>
  <circle cx="9" cy="9" r="4.3" fill="#fbfcff"/>
  <circle cx="9" cy="9" r="3.1" fill="#0f66cf"/>
</svg>

<!-- tray -->
<svg class="abs" style="left:1577px;top:39px" width="16" height="12" viewBox="0 0 16 12"><path d="M2 3 L8 9 L14 3" fill="none" stroke="#111" stroke-width="1.35"/></svg>
<div class="t" style="left:1612px;top:38px;letter-spacing:-.4px;color:#111;">4:58 PM</div>
<div class="abs" style="left:1674px;top:33px;width:1px;height:24px;background:#1c0f1e;"></div>
<div class="abs" style="left:802px;top:33px;width:108px;height:1px;background:rgba(240,232,241,.75);"></div>
<div class="abs" style="left:802px;top:56px;width:108px;height:1px;background:rgba(236,226,238,.8);"></div>
<div class="abs" style="left:35px;top:56px;width:1644px;height:1px;background:rgba(255,255,255,.18);"></div>


<!-- ================= WINDOW ================= -->
<div id="winshadow"></div>
<div id="win">
  <div id="chrome"></div>
  <div id="side"></div>
  <div id="divider"></div>
  <div id="pg" style="position:absolute;left:-370px;top:-193px;width:1716px;height:840px;">
  <!-- window control balls -->
  <div class="ball" style="left:1209px;top:201px;background:radial-gradient(circle at 50% 88%,#c9f79a 0%,#8fdc58 28%,#57b02e 58%,#3b8a22 82%,#2f701c 100%);box-shadow:0 0 0 .6px rgba(40,90,20,.55), 0 1px 1px rgba(255,255,255,.6);"><i></i></div>
  <div class="ball" style="left:1244px;top:201px;background:radial-gradient(circle at 50% 88%,#ffe98a 0%,#ffc84a 30%,#f09a24 60%,#d8741a 84%,#b85c14 100%);box-shadow:0 0 0 .6px rgba(150,80,20,.55), 0 1px 1px rgba(255,255,255,.6);"><i></i></div>
  <div class="ball" style="left:1280px;top:201px;background:radial-gradient(circle at 50% 88%,#ffb0a8 0%,#ff6a60 30%,#ec3030 60%,#c81e1e 84%,#a01414 100%);box-shadow:0 0 0 .6px rgba(130,20,20,.55), 0 1px 1px rgba(255,255,255,.6);"><i></i></div>

  <!-- nav buttons -->
  <div class="navb" style="left:379px;top:239px;"><svg width="27" height="22" viewBox="0 0 27 22" style="position:absolute;left:-1px;top:-1px"><path d="M17.6 6.2 L17.6 15.8 L8.6 11 Z" fill="#8e8e8e"/></svg></div>
  <div class="navb" style="left:411px;top:239px;"><svg width="27" height="22" viewBox="0 0 27 22" style="position:absolute;left:-1px;top:-1px"><path d="M9.6 6.2 L9.6 15.8 L18.6 11 Z" fill="#8e8e8e"/></svg></div>

  <!-- address bar: monitor icon + text -->
  <svg class="abs" style="left:480px;top:241px" width="16" height="16" viewBox="0 0 16 16">
    <defs><linearGradient id="mon1" x1="0" y1="0" x2="0" y2="1"><stop offset="0" stop-color="#d9dbe0"/><stop offset="1" stop-color="#b4b7be"/></linearGradient></defs>
    <rect x=".5" y=".5" width="15" height="12" rx=".8" fill="url(#mon1)" stroke="#8b8e96"/>
    <path d="M1.5 8 L14.5 3.5 V8 Z" fill="#a3a6ad" opacity=".7"/>
    <rect x="1" y="8.6" width="14" height="1" fill="#7c7f87"/>
    <rect x="1" y="9.6" width="14" height="2.4" fill="#d4d6da"/>
    <path d="M6 13 H10 L10.8 14.6 H5.2 Z" fill="#9a9da4"/>
    <rect x="4.6" y="14.4" width="6.8" height=".9" fill="#85888f"/>
  </svg>
  <div class="t" style="left:517px;top:243px;letter-spacing:-.52px;">This PC</div>

  <!-- dropdown chevron + refresh -->
  <svg class="abs" style="left:988px;top:244px" width="14" height="12" viewBox="0 0 14 12"><path d="M2.5 3.2 L6.7 7.4 L10.9 3.2" fill="none" stroke="#8a8a8a" stroke-width="1.25"/></svg>
  <svg class="abs" style="left:1020px;top:241px" width="16" height="16" viewBox="0 0 16 16"><path d="M12.6 5.4 A5.3 5.3 0 1 0 13.3 9.2" fill="none" stroke="#858585" stroke-width="1.3"/><path d="M13.3 2.2 V6.2 H9.3" fill="none" stroke="#858585" stroke-width="1.3"/></svg>

  <!-- search box -->
  <div class="abs" style="left:1057px;top:238px;width:243px;height:25px;box-sizing:border-box;border:1px solid #9b9b9b;border-radius:12.5px;background:linear-gradient(#ededed 0,#fbfbfb 22%,#fff 50%,#fff 100%);box-shadow:0 1px 0 rgba(255,255,255,.55), inset 0 1px 1px rgba(0,0,0,.12);"></div>
  <div class="t" style="left:1067px;top:243px;letter-spacing:-.52px;">Search This PC</div>
  <svg class="abs" style="left:1280px;top:243px" width="16" height="16" viewBox="0 0 16 16"><circle cx="9.3" cy="6" r="3.1" fill="none" stroke="#707070" stroke-width="1.5"/><path d="M7.2 8.3 L2.6 13" stroke="#707070" stroke-width="1.9" stroke-linecap="round"/></svg>

  <!-- ============ SIDEBAR ============ -->
  <div class="abs" style="left:372px;top:367px;width:171px;height:28px;background:linear-gradient(#3f79d2 0,#5c8eea 1.5px,#5586e8 30%,#4670e2 60%,#3b5add 92%,#2c4fbd 100%);"></div>

  <svg class="abs chev" style="left:380px;top:295px" width="10" height="12" viewBox="0 0 10 12"><path d="M2.7 2.5 L6.4 6.3 L2.7 10.1" fill="none" stroke="#6f6f6f" stroke-width="1.25"/></svg>
  <svg class="abs chev" style="left:380px;top:335px" width="10" height="12" viewBox="0 0 10 12"><path d="M2.7 2.5 L6.4 6.3 L2.7 10.1" fill="none" stroke="#6f6f6f" stroke-width="1.25"/></svg>
  <svg class="abs chev" style="left:380px;top:375px" width="10" height="12" viewBox="0 0 10 12"><path d="M2.7 2.5 L6.4 6.3 L2.7 10.1" fill="none" stroke="#8a8a6c" stroke-width="1.25" opacity=".85"/></svg>
  <svg class="abs chev" style="left:380px;top:415px" width="10" height="12" viewBox="0 0 10 12"><path d="M2.7 2.5 L6.4 6.3 L2.7 10.1" fill="none" stroke="#6f6f6f" stroke-width="1.25"/></svg>

  <!-- quick access icon -->
  <svg class="abs" style="left:400px;top:293px" width="16" height="16" viewBox="0 0 16 16">
    <defs><linearGradient id="qa1" x1="0" y1="0" x2="0" y2="1"><stop offset="0" stop-color="#b3b6bd"/><stop offset="1" stop-color="#8a8d94"/></linearGradient></defs>
    <rect x=".5" y=".5" width="15" height="15" rx="2" fill="url(#qa1)" stroke="#85888f"/>
    <path d="M8 3.2 L4.3 12.4 M8 3.2 L11.7 12.4 M2.2 9.2 H13.8" fill="none" stroke="#f2f3f5" stroke-width="1.15" stroke-linecap="round"/>
    <path d="M3 12.4 H5.6 M10.4 12.4 H13" stroke="#f2f3f5" stroke-width="1.1"/>
  </svg>
  <div class="t" style="left:421px;top:294px;letter-spacing:-.34px;">Quick access</div>

  <!-- onedrive icon -->
  <svg class="abs" style="left:400px;top:333px" width="16" height="16" viewBox="0 0 16 16">
    <defs><linearGradient id="od1" x1="0" y1="0" x2="0" y2="1"><stop offset="0" stop-color="#bdc0c6"/><stop offset="1" stop-color="#9a9da4"/></linearGradient></defs>
    <path d="M.5 .6 H2.6 V1.6 H13.4 V.6 H15.5 V15.4 H13.4 V14.4 H2.6 V15.4 H.5 Z" fill="url(#od1)" stroke="#7e8188" stroke-width=".9"/>
    <rect x="7.4" y="6.4" width="1.2" height="3.6" fill="#8d9097" opacity=".8"/>
  </svg>
  <div class="t" style="left:421px;top:334px;letter-spacing:-.3px;">OneDrive</div>

  <!-- this pc icon -->
  <svg class="abs" style="left:400px;top:373px" width="16" height="16" viewBox="0 0 16 16">
    <rect x=".5" y=".5" width="15" height="12" rx=".8" fill="#d5d8de" stroke="#7d8490"/>
    <path d="M1.5 8 L14.5 3.5 V8 Z" fill="#a9adb6" opacity=".75"/>
    <rect x="1" y="8.4" width="14" height="1.1" fill="#6f7684"/>
    <rect x="1" y="9.5" width="14" height="2.5" fill="#e0e2e6"/>
    <path d="M6 13 H10 L10.8 14.6 H5.2 Z" fill="#aab0bd"/>
    <rect x="4.6" y="14.3" width="6.8" height=".9" fill="#8f96a6"/>
  </svg>
  <div class="t" style="left:421px;top:374px;letter-spacing:-.52px;text-shadow:0 0 2px rgba(255,255,255,.85),0 0 1px rgba(255,255,255,.8),1px 1px 1px rgba(255,255,255,.55);">This PC</div>

  <!-- network icon -->
  <svg class="abs" style="left:400px;top:413px" width="16" height="16" viewBox="0 0 16 16">
    <defs><radialGradient id="nw1" cx=".4" cy=".35" r=".75"><stop offset="0" stop-color="#8d8f94"/><stop offset="1" stop-color="#5f6166"/></radialGradient></defs>
    <circle cx="8" cy="8" r="7" fill="url(#nw1)"/>
    <path d="M3.2 4.2 Q5 2.6 6.8 3 Q6.2 4.6 5 5.6 Q4.6 7 3.4 7.4 Q2.4 6 3.2 4.2 Z" fill="#d4d5d8"/>
    <path d="M8.2 8 Q10 7.4 11.4 8.6 Q12.6 10 11.6 11.8 Q10.6 13.4 9.4 13 Q8.8 11.6 8.4 10.4 Q7.4 9 8.2 8 Z" fill="#e0e1e4"/>
    <path d="M10.4 3 Q12 3.4 12.8 4.8 Q11.6 5 10.8 4.4 Z" fill="#c4c5c9"/>
  </svg>
  <div class="t" style="left:420.5px;top:414px;letter-spacing:.3px;">Network</div>

    <!-- ============ CONTENT ============ -->
  <svg width="0" height="0" style="position:absolute">
    <defs>
      <linearGradient id="fFront" x1="0" y1="0" x2="0" y2="1"><stop offset="0" stop-color="#a9c7e2"/><stop offset=".12" stop-color="#9dbedc"/><stop offset=".6" stop-color="#88aed2"/><stop offset="1" stop-color="#769fc6"/></linearGradient>
      <linearGradient id="fBack" x1="0" y1="0" x2="0" y2="1"><stop offset="0" stop-color="#93b5d5"/><stop offset="1" stop-color="#7aa2c6"/></linearGradient>
      <linearGradient id="ejg" x1="0" y1="0" x2="0" y2="1"><stop offset="0" stop-color="#f6f6f6"/><stop offset="1" stop-color="#d6d6d6"/></linearGradient>
      <symbol id="folder" viewBox="0 0 48 36">
        <path d="M3 2 Q3 .3 4.6 .3 H18.6 Q20.2 .3 20.4 1.8 L20.6 3.4 H44.6 Q46 3.4 46 4.8 V9 H2.6 V4 Z" fill="url(#fBack)"/>
        <path d="M.4 7.8 Q.4 6.2 2 6.2 H46 Q47.6 6.2 47.6 7.8 L46.6 33.8 Q46.5 35.6 44.8 35.6 H3.2 Q1.5 35.6 1.4 33.8 Z" fill="url(#fFront)"/>
        <path d="M1.2 7 H46.8" stroke="#c3d9ec" stroke-width=".8" opacity=".8"/>
        <path d="M2.4 35.2 H45.6" stroke="#6690b8" stroke-width=".9" opacity=".9"/>
      </symbol>
      <symbol id="eject" viewBox="0 0 18 18">
        <circle cx="9" cy="9" r="8.1" fill="url(#ejg)" stroke="#7a7a7a" stroke-width="1.3"/>
        <path d="M9 3.6 L13.2 8.2 H4.8 Z" fill="#3f3f3f"/>
        <rect x="4.8" y="9.7" width="8.4" height="1.8" fill="#3f3f3f"/>
        <rect x="5.4" y="12.6" width="7.2" height=".9" fill="#bdbdbd"/>
      </symbol>
    </defs>
  </svg>

  <svg class="abs" style="left:551.5px;top:283.5px" width="18" height="18"><use href="#eject"/></svg>
  <div class="h" style="left:571.4px;top:285px;letter-spacing:-.16px;">Folders (6)</div>
  <div class="abs" style="left:648px;top:294px;width:664px;height:1px;background:#e2e2e2"></div>

  <!-- row 1 -->
  <svg class="abs" style="left:565px;top:318px" width="48" height="36" viewBox="0 0 48 36"><use href="#folder"/>
    <circle cx="23.6" cy="20.6" r="11.2" fill="#6f99c2" opacity=".62"/>
    <path d="M21.4 10.6 H25.8 V15.2 H28.8 L23.6 20.2 L18.4 15.2 H21.4 Z" fill="#93b6d8" opacity=".85"/>
    <rect x="19" y="22" width="9.2" height="5.6" rx=".6" fill="#9dbedd"/>
    <rect x="20.6" y="23.4" width="6" height="2.6" fill="#7099c2"/>
  </svg>
  <div class="t" style="left:617.4px;top:319px;letter-spacing:-.05px;">Desktop</div>

  <svg class="abs" style="left:819px;top:318px" width="48" height="36" viewBox="0 0 48 36"><use href="#folder"/>
    <path d="M15.6 10.4 H26.6 L32.6 16.2 V33.6 H15.6 Z" fill="#8fb3d6" stroke="#6f98c0" stroke-width="1"/>
    <path d="M26.6 10.4 V16.2 H32.6" fill="none" stroke="#6f98c0" stroke-width="1"/>
  </svg>
  <div class="t" style="left:870.9px;top:319px;letter-spacing:.19px;">Documents</div>

  <svg class="abs" style="left:1073px;top:318px" width="48" height="36" viewBox="0 0 48 36"><use href="#folder"/>
    <circle cx="23.6" cy="20.6" r="11.2" fill="#6f99c2" opacity=".62"/>
    <path d="M21.4 10.6 H25.8 V15.2 H28.8 L23.6 20.2 L18.4 15.2 H21.4 Z" fill="#93b6d8" opacity=".85"/>
    <rect x="19" y="22" width="9.2" height="5.6" rx=".6" fill="#9dbedd"/>
    <rect x="20.6" y="23.4" width="6" height="2.6" fill="#7099c2"/>
  </svg>
  <div class="t" style="left:1125.3px;top:319px;letter-spacing:.05px;">Downloads</div>

  <!-- row 2 -->
  <svg class="abs" style="left:565px;top:374px" width="48" height="36" viewBox="0 0 48 36"><use href="#folder"/>
    <path d="M20.4 13.4 L31 10.6 V27.6 A2.7 2.1 0 1 1 29.4 25.7 V15.6 L22 17.5 V29.4 A2.7 2.1 0 1 1 20.4 27.5 Z" fill="#6f99c2" opacity=".9"/>
  </svg>
  <div class="t" style="left:617.4px;top:375px;letter-spacing:.3px;">Music</div>

  <svg class="abs" style="left:819px;top:374px" width="48" height="36" viewBox="0 0 48 36"><use href="#folder"/>
    <path d="M11.4 13.6 L14 12.6 H31 L36.4 14 V28.6 H11.4 Z" fill="#8db1d4" stroke="#6f98c0" stroke-width="1"/>
    <circle cx="27" cy="20.6" r="5" fill="#7aa3ca" stroke="#6a93bc" stroke-width="1"/>
    <circle cx="27" cy="20.6" r="2" fill="#6a93bc"/>
    <rect x="15.4" y="15.2" width="5" height="1.2" fill="#6f98c0"/>
  </svg>
  <div class="t" style="left:870.9px;top:375px;letter-spacing:0px;">Pictures</div>

  <svg class="abs" style="left:1073px;top:374px" width="48" height="36" viewBox="0 0 48 36"><use href="#folder"/>
    <rect x="14" y="9.8" width="20" height="22.4" fill="#8db1d4" stroke="#6f98c0" stroke-width="1"/>
    <path d="M17.6 9.8 V32.2 M30.4 9.8 V32.2 M17.6 20.8 H30.4" stroke="#6f98c0" stroke-width="1" fill="none"/>
    <path d="M15.8 11.6 V31" stroke="#6f98c0" stroke-width="1.6" stroke-dasharray="1.8 1.6"/>
    <path d="M32.2 11.6 V31" stroke="#6f98c0" stroke-width="1.6" stroke-dasharray="1.8 1.6"/>
  </svg>
  <div class="t" style="left:1126px;top:375px;letter-spacing:-.2px;">Videos</div>

  <!-- devices header -->
  <svg class="abs" style="left:551.5px;top:422.5px" width="18" height="18"><use href="#eject"/></svg>
  <div class="h" style="left:571.3px;top:424px;letter-spacing:-.11px;">Devices and drives (2)</div>
  <div class="abs" style="left:724px;top:433px;width:588px;height:1px;background:#e2e2e2"></div>

  <!-- HDD -->
  <svg class="abs" style="left:566px;top:450px" width="46" height="48" viewBox="0 0 46 48">
    <defs>
      <linearGradient id="hd1" x1="0" y1="0" x2="0" y2="1"><stop offset="0" stop-color="#b4b4b8"/><stop offset="1" stop-color="#9d9da2"/></linearGradient>
      <linearGradient id="hd2" x1="0" y1="0" x2="0" y2="1"><stop offset="0" stop-color="#8a8a8f"/><stop offset="1" stop-color="#5e5e63"/></linearGradient>
    </defs>
    <path d="M5.6 1.8 H41 L44.6 37.4 H1.6 Z" fill="url(#hd1)" stroke="#8b8b90" stroke-width=".8"/>
    <path d="M1.6 37.4 H44.6 L44.2 44 Q44.1 44.6 43.4 44.6 H2.8 Q2.1 44.6 2 44 Z" fill="url(#hd2)"/>
    <rect x="10" y="4.2" width="19.6" height="3.8" fill="#1c1c1e"/>
    <rect x="9.4" y="9" width="21" height="1.3" fill="#ececee"/>
    <path d="M6.6 21 Q8 35.6 23 35.8 Q38 35.6 39.6 21" fill="none" stroke="#d2d2d6" stroke-width="1.1" opacity=".9"/>
    <ellipse cx="23" cy="22" rx="15" ry="11.5" fill="#a9a9ae" opacity=".6"/>
    <path d="M18 24 Q22 28 27.6 25" fill="none" stroke="#e6e6ea" stroke-width="1.2"/>
    <circle cx="6.8" cy="3.2" r=".9" fill="#6b6b70"/><circle cx="39.6" cy="3.2" r=".9" fill="#6b6b70"/>
    <circle cx="5.2" cy="17.4" r=".9" fill="#6b6b70"/><circle cx="41" cy="17.4" r=".9" fill="#6b6b70"/>
    <circle cx="3.6" cy="35" r=".9" fill="#6b6b70"/><circle cx="42.6" cy="35" r=".9" fill="#6b6b70"/>
    <rect x="7" y="39" width="12" height="4.6" fill="#55555a"/>
    <rect x="20.4" y="39" width="11.6" height="4.6" fill="#3a3a3e"/>
    <path d="M23.4 39 V43.6 M26.2 39 V43.6 M29 39 V43.6" stroke="#77777c" stroke-width=".6"/>
    <rect x="35.2" y="41" width="1.6" height="1.6" fill="#c8d84a"/>
    <rect x="38.4" y="41" width="1.4" height="1.4" fill="#8a8ab8"/>
  </svg>
  <div class="t" style="left:617px;top:451px;letter-spacing:-.14px;">Local Disk (C:)</div>
  <div class="abs" style="left:617px;top:467px;width:189px;height:13px;box-sizing:border-box;border:1px solid #b5b5b5;border-radius:1px;background:linear-gradient(#ececec,#e2e2e2 45%,#d8d8d8 50%,#e4e4e4);box-shadow:0 1px 0 rgba(0,0,0,.08);">
    <div style="position:absolute;left:0;top:0;width:77px;height:11px;background:linear-gradient(#86c3f6 0,#6db7f5 40%,#2f9ff0 55%,#37a6f2 80%,#58b4f4 100%);"></div>
  </div>
  <div class="t" style="left:618px;top:482px;letter-spacing:-.5px;color:#6d6d6d;">34.3 GB free of 59.3 GB</div>

  <!-- DVD -->
  <div class="abs" style="left:820px;top:450.6px;width:46px;height:46px;border-radius:50%;background:
     radial-gradient(circle closest-side at 50% 50%, #ffffff 0, #fafbfd 13%, #e4e8ef 17%, #eef1f5 24%, #e6eaf0 34%, rgba(176,182,194,.95) 38%, rgba(200,204,212,.6) 41%, rgba(255,255,255,0) 44%, rgba(255,255,255,0) 93%, rgba(150,150,150,.55) 97%, rgba(140,140,140,.7) 100%),
     conic-gradient(from 0deg at 50% 50%, #d2c8c0 0deg, #e0dbd7 20deg, #f7f7f7 42deg, #f5f5f5 72deg, #cfcfcf 95deg, #bdbdc6 112deg, #8da3f3 124deg, #8fe49b 138deg, #f1e58c 147deg, #f5b08c 157deg, #dfc8ba 170deg, #d2c8c0 180deg, #e0dbd7 200deg, #f7f7f7 222deg, #f5f5f5 252deg, #cfcfcf 275deg, #bdbdc6 292deg, #8da3f3 305deg, #8fe49b 320deg, #f1e58c 329deg, #f5b08c 339deg, #dfc8ba 350deg, #d2c8c0 360deg);
     box-shadow:0 1px 2px rgba(0,0,0,.18);"></div>
  <div class="t" style="left:871.5px;top:458px;letter-spacing:-.27px;">DVD Drive (D:)</div>

</div>

</div>

</body>
</html>
